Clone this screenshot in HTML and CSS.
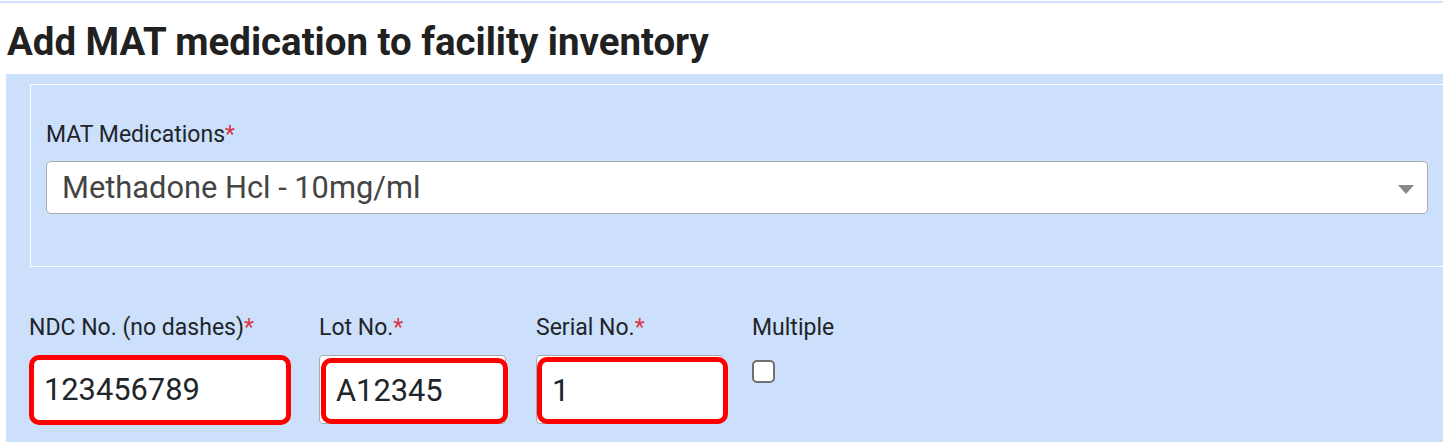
FILE: index.html
```html
<!DOCTYPE html>
<html lang="en">
<head>
<meta charset="utf-8">
<title>Add MAT medication to facility inventory</title>
<link rel="stylesheet" href="styles.css">
</head>
<body>
<div class="topbar"></div>
<h1 class="page-title">Add MAT medication to facility inventory</h1>
<div class="panel">
  <div class="card">
    <label class="field-label">MAT Medications<span class="req">*</span></label>
    <div class="select">
      <span class="select-text">Methadone Hcl - 10mg/ml</span>
      <svg class="select-arrow" width="16" height="9" viewBox="0 0 16 9"><polygon points="0,0 16,0 8,9" fill="#888"/></svg>
    </div>
  </div>
  <div class="fields">
    <div class="field field-ndc">
      <label class="field-label">NDC No. (no dashes)<span class="req">*</span></label>
      <input class="text-input input-ndc" type="text" value="123456789">
    </div>
    <div class="field field-lot">
      <label class="field-label">Lot No.<span class="req">*</span></label>
      <div class="shell">
        <input class="text-input input-lot" type="text" value="A12345">
      </div>
    </div>
    <div class="field field-serial">
      <label class="field-label">Serial No.<span class="req">*</span></label>
      <div class="shell">
        <input class="text-input input-serial" type="text" value="1">
      </div>
    </div>
    <div class="field field-multiple">
      <label class="field-label">Multiple</label>
      <input class="checkbox" type="checkbox">
    </div>
  </div>
</div>
</body>
</html>
```
FILE: styles.css
```css
html, body {
  overflow: hidden;
}
body {
  margin: 0;
  background: #fff;
  font-family: Roboto, "Liberation Sans", Arial, sans-serif;
  color: #212529;
}
.topbar {
  height: 2px;
  margin-top: 1px;
  background: #cfe0fb;
}
.page-title {
  margin: 14.6px 0 9.4px 7px;
  font-size: 38.4px;
  line-height: 47px;
  font-weight: 700;
  color: #212121;
}
.panel {
  margin-left: 6px;
  background: #cce0fc;
  padding: 10px 0 60px 24px;
}
.card {
  border: 1px solid #fff;
  margin-right: -1px;
  padding: 33px 15px 52px 15px;
}
.field-label {
  display: block;
  font-size: 23px;
  line-height: 33.6px;
  margin-bottom: 9.6px;
  white-space: nowrap;
  color: #212529;
}
.req {
  color: #dc3545;
}
.select {
  box-sizing: border-box;
  height: 53px;
  background: #fff;
  border: 1px solid #aaa;
  border-radius: 5px;
  display: flex;
  align-items: center;
  justify-content: space-between;
  padding: 0 13px 0 15px;
}
.select-text {
  font-size: 30.8px;
  color: #444;
}
.select-arrow {
  margin-top: 3px;
}
.fields {
  margin-top: 44.3px;
  margin-left: -1px;
  display: grid;
  grid-template-columns: 262px 189px 191px auto;
  column-gap: 28px;
  align-items: start;
}
.text-input {
  display: block;
  box-sizing: border-box;
  border: 5px solid #ff0000;
  border-radius: 10px;
  background: #fff;
  padding: 0 10px;
  margin: 0;
  font-family: Roboto, "Liberation Sans", Arial, sans-serif;
  font-size: 30.8px;
  color: #212529;
  outline: none;
}
.input-ndc {
  width: 262px;
  height: 70px;
}
.shell {
  box-sizing: border-box;
  width: 187px;
  height: 69px;
  border: 1px solid #aaa;
  border-radius: 4px;
  background: #fff;
}
.input-lot {
  width: 187px;
  height: 66px;
  margin: 2px 0 0 1px;
}
.input-serial {
  width: 191px;
  height: 67px;
  margin: 1px 0 0 0;
}
.field-multiple {
  margin-left: -3px;
}
.checkbox {
  appearance: none;
  -webkit-appearance: none;
  box-sizing: border-box;
  width: 22.5px;
  height: 23px;
  margin: 14.6px 0 0 0;
  border: 2px solid #707070;
  border-radius: 5px;
  background: #fff;
  display: block;
}
```
